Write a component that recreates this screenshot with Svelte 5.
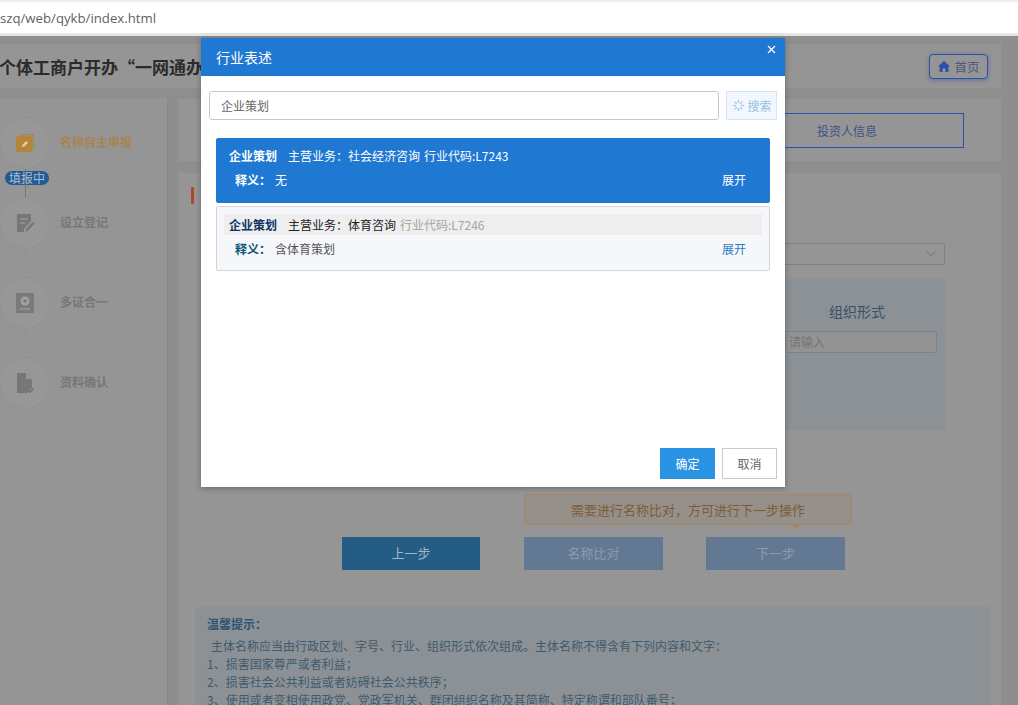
<script lang="ts">
	// page colours are the dimmed values seen behind the dialog
	const steps = [
		{ label: '名称自主申报', icon: 'note', active: true },
		{ label: '设立登记', icon: 'edit', active: false },
		{ label: '多证合一', icon: 'cert', active: false },
		{ label: '资料确认', icon: 'file', active: false }
	];

	const results = [
		{ name: '企业策划', biz: '社会经济咨询', code: 'L7243', desc: '无', selected: true },
		{ name: '企业策划', biz: '体育咨询', code: 'L7246', desc: '含体育策划', selected: false }
	];

	const rays = [0, 45, 90, 135, 180, 225, 270, 315];
</script>

<div class="window">
	<div class="urlbar"><span class="url">szq/web/qykb/index.html</span></div>

	<div class="page">
		<header class="top">
			<h1>个体工商户开办“一网通办”</h1>
			<button class="home">
				<svg width="12" height="11" viewBox="0 0 12 11"><path d="M6 0 0 5.4h1.6V11h3V7.4h2.8V11h3V5.4H12z" fill="#2a52a8" /></svg>
				首页
			</button>
		</header>

		<div class="columns">
			<aside class="side">
				{#each steps as step, i}
					<div class="step" class:active={step.active} class:last={i === steps.length - 1}>
						<div class="circle">
							{#if step.icon === 'note'}
								<svg width="20" height="20" viewBox="0 0 20 20">
									<path d="M5 1h14v16h-1.500V2.500H5z" fill="#a98750" />
									<rect x="1" y="3" width="16" height="16" fill="#b5853c" />
									<path d="m7 14 .6-2.500 3.600-3.600 1.900 1.900-3.600 3.600z" fill="#dccdb0" />
								</svg>
							{:else if step.icon === 'edit'}
								<svg width="20" height="20" viewBox="0 0 20 20">
									<path d="M2 1h14v7l-7 7.500V19H2z" fill="#77777a" />
									<path d="M5 6h8M5 10h5" stroke="#969696" stroke-width="1.500" />
									<path d="m10.500 18.500.7-2.700 6.500-6.800 1.800 1.700-6.500 6.900z" fill="#77777a" />
								</svg>
							{:else if step.icon === 'cert'}
								<svg width="20" height="22" viewBox="0 0 20 22">
									<rect x="1" y="1" width="18" height="20" fill="#7a7a7d" />
									<circle cx="10" cy="9" r="4.500" fill="#a0a0a2" />
									<circle cx="10" cy="9" r="1.800" fill="#7a7a7d" />
									<path d="M5 17h10" stroke="#a0a0a2" stroke-width="1.200" />
								</svg>
							{:else}
								<svg width="20" height="22" viewBox="0 0 20 22">
									<path d="M2 1h9l6 6v8.500l-5 5.500H2z" fill="#77777a" />
									<path d="M11 1v6h6" fill="#969696" />
									<path d="m13 18 2 2 3.500-3.500" stroke="#77777a" stroke-width="2" fill="none" />
								</svg>
							{/if}
						</div>
						<span class="label">{step.label}</span>
						{#if step.active}<span class="badge">填报中</span>{/if}
					</div>
				{/each}
			</aside>

			<main class="main">
				<section class="panel tabs">
					<div class="tab">投资人信息</div>
				</section>

				<section class="panel body">
					<div class="marker"></div>

					<div class="select">
						<svg width="12" height="8" viewBox="0 0 12 8"><path d="m1.500 1.500 4.500 4.500 4.500-4.500" fill="none" stroke="#808080" stroke-width="1.200" /></svg>
					</div>

					<div class="parts">
						<div class="part">
							<div class="part-title">组织形式</div>
							<div class="part-input">请输入</div>
						</div>
					</div>

					<div class="hint">需要进行名称比对，方可进行下一步操作</div>

					<div class="actions">
						<button class="prev">上一步</button>
						<button class="off">名称比对</button>
						<button class="off">下一步</button>
					</div>

					<div class="tips">
						<h4>温馨提示：</h4>
						<p class="lead">主体名称应当由行政区划、字号、行业、组织形式依次组成。主体名称不得含有下列内容和文字：</p>
						<p>1、损害国家尊严或者利益；</p>
						<p>2、损害社会公共利益或者妨碍社会公共秩序；</p>
						<p>3、使用或者变相使用政党、党政军机关、群团组织名称及其简称、特定称谓和部队番号；</p>
					</div>
				</section>
			</main>
		</div>
	</div>

	<div class="dialog">
		<div class="dialog-head">
			<span>行业表述</span>
			<svg class="close" width="9" height="9" viewBox="0 0 9 9"><path d="m1 1 7 7M8 1 1 8" stroke="#fff" stroke-width="1.300" /></svg>
		</div>

		<div class="search">
			<div class="search-input">企业策划</div>
			<button class="search-btn">
				<svg width="13" height="13" viewBox="0 0 13 13">
					{#each rays as r}
						<path d="M6.500 1v3" stroke="#a0c6ea" stroke-width="1.300" transform="rotate({r} 6.500 6.500)" />
					{/each}
				</svg>
				搜索
			</button>
		</div>

		<div class="results">
			{#each results as item}
				<div class="card" class:selected={item.selected}>
					<div class="line first">
						<b class="name">{item.name}</b>
						<span class="biz">主营业务：{item.biz}</span>
						<span class="code">行业代码:{item.code}</span>
					</div>
					<div class="line second">
						<b class="term">释义：</b>
						<span class="desc">{item.desc}</span>
						<span class="more">展开</span>
					</div>
				</div>
			{/each}
		</div>

		<div class="dialog-foot">
			<button class="ok">确定</button>
			<button class="cancel">取消</button>
		</div>
	</div>
</div>

<style>
	:global(body) {
		overflow: hidden;
		background: #8e8e8e;
	}

	button {
		font: inherit;
		cursor: pointer;
	}

	.window {
		position: relative;
		width: 1018px;
		height: 705px;
		overflow: hidden;
		font-family: 'Noto Sans CJK SC', 'Liberation Sans', sans-serif;
		font-size: 12px;
	}

	.urlbar {
		box-sizing: border-box;
		height: 36px;
		display: flex;
		align-items: center;
		background: #fff;
		border-top: 2px solid #eeeeee;
		border-bottom: 3px solid #e6e6e6;
	}

	.url {
		font-family: 'Open Sans', sans-serif;
		font-size: 13.200px;
		color: #5f5f5f;
	}

	.page {
		height: 669px;
		padding-top: 7px;
		box-sizing: border-box;
		background: #8e8e8e;
	}

	.top {
		box-sizing: border-box;
		width: 1002px;
		height: 46px;
		display: flex;
		align-items: center;
		justify-content: space-between;
		padding-right: 13px;
		background: #959595;
		border: 1px solid #909090;
		border-left: 0;
	}

	h1 {
		margin: 0 0 0 -1px;
		font-size: 17px;
		font-weight: 700;
		color: #2b2b2b;
		white-space: nowrap;
	}

	.home {
		box-sizing: border-box;
		width: 59px;
		height: 25px;
		display: flex;
		align-items: center;
		justify-content: center;
		gap: 4px;
		padding: 0 0 0 1px;
		background: #959595;
		border: 1px solid #2c52a8;
		border-radius: 4px;
		box-shadow: 0 1px 4px rgba(44, 82, 168, 0.55);
		color: #4c5a78;
		font-size: 12.500px;
	}

	.columns {
		display: flex;
		gap: 9px;
		margin-top: 9px;
		width: 1002px;
	}

	.side {
		box-sizing: border-box;
		width: 168px;
		height: 640px;
		padding-top: 19px;
		background: #959595;
		border-right: 1px solid #8a8a8a;
	}

	.step {
		position: relative;
		display: flex;
		align-items: center;
		gap: 9px;
		height: 52px;
		margin-bottom: 28px;
		margin-left: -1px;
		color: #777777;
		font-weight: 700;
	}

	.label {
		padding-bottom: 3px;
	}

	.step::after {
		content: '';
		position: absolute;
		left: 26px;
		top: 52px;
		height: 28px;
		width: 1px;
		background: #919191;
	}

	.step.active::after {
		background: #777777;
	}

	.step.last::after {
		display: none;
	}

	.circle {
		box-sizing: border-box;
		width: 52px;
		height: 52px;
		flex: none;
		display: flex;
		align-items: center;
		justify-content: center;
		border-radius: 50%;
		background: #979797;
		border: 1px solid #919191;
	}

	.active .label {
		color: #a8834f;
	}

	.badge {
		position: absolute;
		left: 6px;
		top: 54px;
		width: 44px;
		height: 14px;
		line-height: 14px;
		text-align: center;
		border-radius: 7px;
		background: #245a94;
		color: #a9bdd2;
		font-size: 12px;
		font-weight: 400;
	}

	.main {
		width: 825px;
		display: flex;
		flex-direction: column;
		gap: 10px;
	}

	.panel {
		box-sizing: border-box;
		background: #959595;
		border: 1px solid #8f8f8f;
	}

	.tabs {
		height: 64px;
		display: flex;
		justify-content: flex-end;
		align-items: center;
		padding-right: 37px;
	}

	.tab {
		box-sizing: border-box;
		width: 234px;
		height: 35px;
		line-height: 33px;
		text-align: center;
		border: 1px solid #2a50b0;
		color: #3d5288;
		font-size: 12px;
	}

	.body {
		height: 534px;
		padding: 14px 10px 0 13px;
	}

	.marker {
		width: 3px;
		height: 17px;
		background: #b0452c;
		border-radius: 1px;
	}

	.select {
		box-sizing: border-box;
		width: 300px;
		height: 22px;
		margin: 39px 46px 0 auto;
		display: flex;
		align-items: center;
		justify-content: flex-end;
		padding-right: 7px;
		border: 1px solid #808080;
		border-radius: 2px;
	}

	.parts {
		width: 300px;
		height: 151px;
		margin: 14px 46px 0 auto;
		display: flex;
		justify-content: flex-end;
		background: #8c9196;
	}

	.part {
		width: 152px;
		margin-right: 8px;
		padding-top: 22px;
	}

	.part-title {
		padding-right: 8px;
		text-align: center;
		font-size: 14px;
		line-height: 20px;
		color: #37506a;
	}

	.part-input {
		box-sizing: border-box;
		height: 22px;
		margin-top: 10px;
		padding-left: 3px;
		line-height: 20px;
		border: 1px solid #748494;
		border-radius: 2px;
		background: #939393;
		color: #757575;
	}

	.hint {
		position: relative;
		box-sizing: border-box;
		width: 328px;
		height: 31px;
		margin: 64px 0 0 333px;
		line-height: 29px;
		text-align: center;
		border: 1px solid #a38760;
		border-radius: 2px;
		background: #95908a;
		color: #7e5c36;
		font-size: 13px;
	}

	.hint::after {
		content: '';
		position: absolute;
		left: 266px;
		top: 29px;
		border: 5px solid transparent;
		border-top-color: #a38760;
	}

	.actions {
		display: flex;
		margin: 12px 0 0 151px;
	}

	.actions button {
		height: 33px;
		padding: 0 0 2px;
		border: 0;
		font-size: 13px;
	}

	.prev {
		width: 138px;
		margin-right: 44px;
		background: #245c84;
		color: #a3b5c4;
	}

	.off {
		width: 139px;
		margin-right: 43px;
		background: #637893;
		color: #889bb2;
	}

	.tips {
		height: 120px;
		margin: 37px 0 0 4px;
		padding: 8px 12px;
		background: #8c9196;
		color: #3f5a6c;
	}

	h4 {
		margin: 0 0 4px;
		font-size: 12px;
		line-height: 18px;
		color: #2e5670;
	}

	.tips p {
		margin: 0;
		line-height: 18px;
	}

	.lead {
		padding-left: 4px;
	}

	.dialog {
		position: absolute;
		left: 201px;
		top: 38px;
		width: 584px;
		height: 449px;
		display: flex;
		flex-direction: column;
		background: #fff;
		box-shadow: 0 1px 6px rgba(0, 0, 0, 0.3);
	}

	.dialog-head {
		position: relative;
		height: 38px;
		flex: none;
		padding-left: 15px;
		line-height: 38px;
		background: #1f78d1;
		color: #fff;
		font-size: 14px;
	}

	.close {
		position: absolute;
		right: 9px;
		top: 7px;
	}

	.search {
		display: flex;
		gap: 7px;
		padding: 15px 8px 0;
	}

	.search-input {
		box-sizing: border-box;
		flex: 1;
		height: 29px;
		padding-left: 11px;
		line-height: 27px;
		border: 1px solid #c8c8c8;
		border-radius: 3px;
		color: #666;
	}

	.search-btn {
		box-sizing: border-box;
		width: 51px;
		height: 29px;
		flex: none;
		display: flex;
		align-items: center;
		justify-content: center;
		gap: 2px;
		padding: 0 0 0 1px;
		background: #f1f7fd;
		border: 1px solid #d6e3f0;
		color: #97bfe6;
	}

	.results {
		flex: 1;
		display: flex;
		flex-direction: column;
		gap: 3px;
		padding: 18px 15px 0;
	}

	.card {
		box-sizing: border-box;
		height: 65px;
		padding: 7px;
		background: #f5f7fa;
		border: 1px solid #d3d6da;
		border-radius: 2px;
		color: #333;
	}

	.card.selected {
		padding-top: 6px;
		background: #1f78d1;
		border-color: #1f78d1;
		color: #fff;
	}

	.line {
		display: flex;
		align-items: center;
		height: 21px;
		padding-left: 5px;
		white-space: nowrap;
	}

	.first {
		background: #eeeeee;
	}

	.selected .first {
		background: none;
	}

	.second {
		height: 27px;
		padding-left: 11px;
	}

	.name {
		width: 59px;
		color: #0f3568;
	}

	.biz {
		color: #222;
		margin-right: 4px;
	}

	.code {
		color: #a3a3a3;
	}

	.term {
		width: 40px;
		color: #0d5878;
	}

	.desc {
		flex: 1;
		color: #555;
	}

	.more {
		margin-right: 16px;
		color: #2f7cc4;
	}

	.selected .name,
	.selected .biz,
	.selected .code,
	.selected .term,
	.selected .desc,
	.selected .more {
		color: #fff;
	}

	.dialog-foot {
		display: flex;
		justify-content: flex-end;
		gap: 7px;
		padding: 0 8px 8px;
	}

	.dialog-foot button {
		box-sizing: border-box;
		width: 55px;
		height: 31px;
		padding: 0;
	}

	.ok {
		background: #2a93e4;
		border: 0;
		color: #fff;
	}

	.cancel {
		background: #fff;
		border: 1px solid #c8c8d0;
		color: #666;
	}
</style>
